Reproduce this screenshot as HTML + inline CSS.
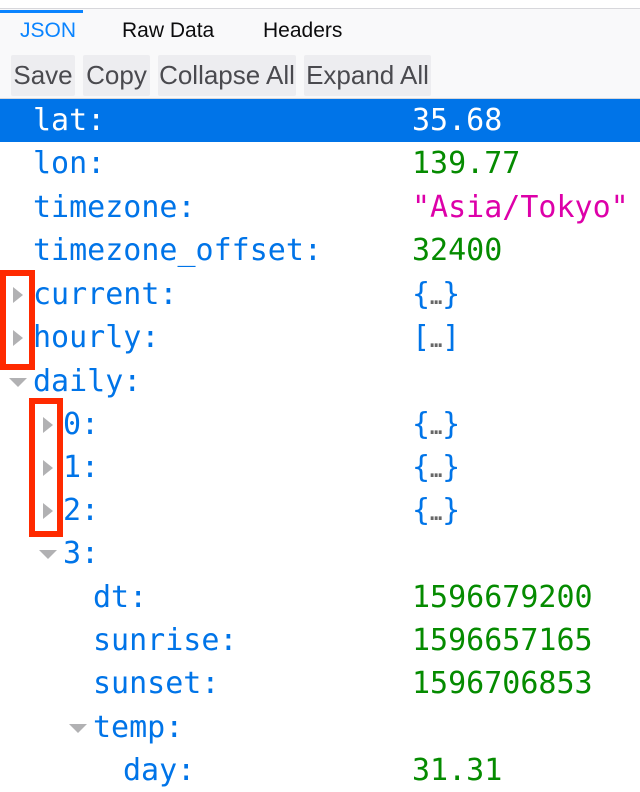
<!DOCTYPE html>
<html><head><style>
body{margin:0;width:640px;height:787px;overflow:hidden;background:#fff;position:relative;font-family:"Liberation Sans",sans-serif}
.tabs{position:absolute;top:8px;left:0;width:640px;height:43px;background:#f9f9fa;border-top:1px solid #d7d7db;border-bottom:1px solid #d7d7db}
.tabs .ul{position:absolute;left:0;top:1px;width:83px;height:3px;background:#0a84ff}
.tab{position:absolute;top:10px;font-size:21px;color:#0c0c0d;white-space:nowrap}
.bar{position:absolute;top:52px;left:0;width:640px;height:46px;background:#f9f9fa;border-bottom:1px solid #d7d7db}
.btn{position:absolute;top:3px;height:41px;background:#ededf0;border-radius:2px;color:#4a4a4f;font-size:26px;line-height:41px;text-align:center;white-space:nowrap;overflow:visible}
.row{position:absolute;left:0;width:640px;height:43px;font-family:"DejaVu Sans Mono","Liberation Mono",monospace;font-size:30px;line-height:43px;white-space:nowrap}
.k{position:absolute;color:#0074e8}
.v{position:absolute;left:412px}
.n{color:#058b00}.s{color:#dd00a9}.b{color:#0074e8}.e{color:#666;font-size:20px;font-weight:bold}
.sel{background:#0074e8}.sel .k,.sel .v{color:#fff}
.ar{position:absolute;top:14px;width:0;height:0;border-top:8px solid transparent;border-bottom:8px solid transparent;border-left:10px solid #b1b1b3}
.ad{position:absolute;top:18px;width:0;height:0;border-left:9px solid transparent;border-right:9px solid transparent;border-top:9px solid #b1b1b3}
.red{position:absolute;border:6px solid #ff2a00}
</style></head><body>
<div class="tabs"><div class="ul"></div>
<div class="tab" style="left:20px;color:#0a84ff">JSON</div>
<div class="tab" style="left:122px">Raw Data</div>
<div class="tab" style="left:263px">Headers</div></div>
<div class="bar">
<div class="btn" style="left:11px;width:64px">Save</div>
<div class="btn" style="left:83px;width:67px">Copy</div>
<div class="btn" style="left:158px;width:138px">Collapse All</div>
<div class="btn" style="left:304px;width:127px">Expand All</div></div>

<div class="row sel" style="top:99px"><span class="k" style="left:33px">lat:</span><span class="v">35.68</span></div>
<div class="row" style="top:142px"><span class="k" style="left:33px">lon:</span><span class="v n">139.77</span></div>
<div class="row" style="top:186px"><span class="k" style="left:33px">timezone:</span><span class="v s">"Asia/Tokyo"</span></div>
<div class="row" style="top:229px"><span class="k" style="left:33px">timezone_offset:</span><span class="v n">32400</span></div>
<div class="row" style="top:273px"><span class="ar" style="left:13px"></span><span class="k" style="left:33px">current:</span><span class="v b">{<span class="e">…</span>}</span></div>
<div class="row" style="top:316px"><span class="ar" style="left:13px"></span><span class="k" style="left:33px">hourly:</span><span class="v b">[<span class="e">…</span>]</span></div>
<div class="row" style="top:360px"><span class="ad" style="left:9px"></span><span class="k" style="left:33px">daily:</span></div>
<div class="row" style="top:403px"><span class="ar" style="left:43px"></span><span class="k" style="left:63px">0:</span><span class="v b">{<span class="e">…</span>}</span></div>
<div class="row" style="top:446px"><span class="ar" style="left:43px"></span><span class="k" style="left:63px">1:</span><span class="v b">{<span class="e">…</span>}</span></div>
<div class="row" style="top:489px"><span class="ar" style="left:43px"></span><span class="k" style="left:63px">2:</span><span class="v b">{<span class="e">…</span>}</span></div>
<div class="row" style="top:532px"><span class="ad" style="left:39px"></span><span class="k" style="left:63px">3:</span></div>
<div class="row" style="top:576px"><span class="k" style="left:93px">dt:</span><span class="v n">1596679200</span></div>
<div class="row" style="top:619px"><span class="k" style="left:93px">sunrise:</span><span class="v n">1596657165</span></div>
<div class="row" style="top:662px"><span class="k" style="left:93px">sunset:</span><span class="v n">1596706853</span></div>
<div class="row" style="top:706px"><span class="ad" style="left:69px"></span><span class="k" style="left:93px">temp:</span></div>
<div class="row" style="top:749px"><span class="k" style="left:123px">day:</span><span class="v n">31.31</span></div>

<div class="red" style="left:0;top:270px;width:23px;height:88px"></div>
<div class="red" style="left:29px;top:398px;width:22px;height:127px"></div>
</body></html>
